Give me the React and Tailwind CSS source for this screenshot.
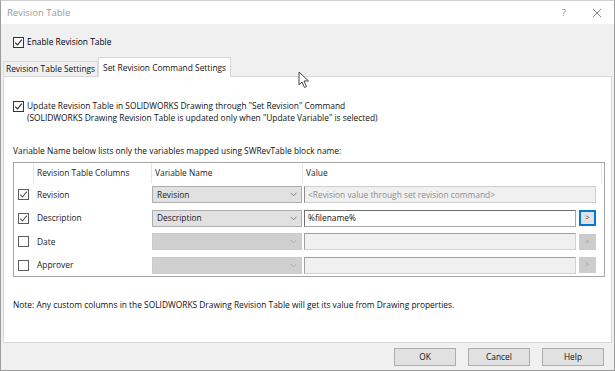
import React from 'react';

const Check = ({ checked, light }) => (
  <span
    className={`w-[11px] h-[11px] flex items-center justify-center bg-white border ${
      light ? 'border-[#5a5a5a]' : 'border-[#333333]'
    }`}
  >
    {checked && (
      <svg width="9" height="9" viewBox="0 0 9 9">
        <path d="M1.2 4.6 L3.5 7 L7.8 1.6" fill="none" stroke={light ? '#555' : '#222'} strokeWidth="1.1" />
      </svg>
    )}
  </span>
);

const Chevron = ({ color }) => (
  <svg width="7" height="5" viewBox="0 0 7 5">
    <path d="M0.5 0.8 L3.5 3.8 L6.5 0.8" fill="none" stroke={color} strokeWidth="0.9" />
  </svg>
);

const rows = [
  { label: 'Revision', checked: true, variable: 'Revision', kind: 'readonly' },
  { label: 'Description', checked: true, variable: 'Description', kind: 'active' },
  { label: 'Date', checked: false, variable: '', kind: 'disabled' },
  { label: 'Approver', checked: false, variable: '', kind: 'disabled' },
];

const Row = ({ row }) => {
  const enabled = row.kind !== 'disabled';
  return (
    <div className="grid grid-cols-[20px_118px_151px_1fr] h-[23.5px] items-center">
      <div className="pl-[4px]">
        <Check checked={row.checked} light />
      </div>
      <div className="pl-[3px] text-[#1a1a1a]">{row.label}</div>
      <div
        className={`h-[17px] w-[150px] flex items-center justify-between pl-[4px] pr-[4px] border ${
          enabled ? 'bg-[#e1e1e1] border-[#adadad] text-[#222]' : 'bg-[#d0d0d0] border-[#cacaca]'
        }`}
      >
        <span>{row.variable}</span>
        <Chevron color={enabled ? '#777' : '#aaa'} />
      </div>
      <div className="flex items-center pl-[1px] pr-[8px] gap-[3px]">
        {row.kind === 'readonly' ? (
          <div className="h-[17px] flex-1 bg-[#f0f0f0] border border-[#cfcfcf] border-l-[#8c8c8c] flex items-center pl-[3px] text-[#8d8d8d]">
            &lt;Revision value through set revision command&gt;
          </div>
        ) : (
          <>
            <div
              className={`h-[17px] flex-1 flex items-center pl-[3px] border ${
                row.kind === 'active'
                  ? 'bg-white border-[#a8a8a8] border-t-[#6e6e6e] border-l-[#6e6e6e] text-[#111]'
                  : 'bg-[#f0f0f0] border-[#d4d4d4] border-t-[#a0a0a0] border-l-[#a0a0a0]'
              }`}
            >
              {row.kind === 'active' ? '%filename%' : ''}
            </div>
            <div
              className={`w-[17px] h-[16px] flex items-center justify-center text-[7px] ${
                row.kind === 'active'
                  ? 'bg-[#e1e1e1] border border-[#0078d7] outline outline-[#0078d7] -outline-offset-2 text-[#333]'
                  : 'bg-[#cccccc] text-[#9d9d9d]'
              }`}
            >
              &gt;
            </div>
          </>
        )}
      </div>
    </div>
  );
};

const Btn = ({ children }) => (
  <div className="w-[62px] h-[18px] bg-[#e1e1e1] border border-[#adadad] flex items-center justify-center text-[#111]">
    {children}
  </div>
);

export default function App() {
  return (
    <div className="relative w-[615px] h-[371px] bg-[#f0f0f0] border border-[#9c9c9c] border-t-[#cfcfcf] flex flex-col font-['Segoe_UI','Open_Sans',sans-serif] text-[8.4px] leading-[12px] text-black overflow-hidden">
      <div className="h-[23px] bg-white flex items-center justify-between pl-[6px] pr-[12px] shrink-0">
        <span className="text-[9.5px] text-[#9a9a9a]">Revision Table</span>
        <div className="flex items-center gap-[26px] text-[#8a8a8a]">
          <span className="text-[9px]">?</span>
          <svg width="10" height="10" viewBox="0 0 10 10">
            <path d="M1 1 L9 9 M9 1 L1 9" stroke="#777" strokeWidth="0.9" />
          </svg>
        </div>
      </div>

      <div className="pl-[12px] pt-[13px] h-[33px] flex items-start gap-[3px] shrink-0">
        <Check checked />
        <span className="-mt-[1px]">Enable Revision Table</span>
      </div>

      <div className="flex items-end px-[2px] h-[19px] shrink-0">
        <div className="h-[15px] px-[2px] flex items-center bg-[#f0f0f0] border border-b-0 border-[#d9d9d9] text-[#111]">
          Revision Table Settings
        </div>
        <div className="h-[20px] -mb-[1px] px-[4px] flex items-center bg-white border border-b-0 border-[#d9d9d9] relative z-10 text-[#111]">
          Set Revision Command Settings
        </div>
      </div>

      <div className="flex-1 mx-[2px] bg-white border border-[#d9d9d9] pl-[9px] pr-[2px] pt-[24px]">
        <div className="flex items-start gap-[3px]">
          <Check checked />
          <div className="-mt-[1px] text-[#111]">
            <div>Update Revision Table in SOLIDWORKS Drawing through "Set Revision" Command</div>
            <div>(SOLIDWORKS Drawing Revision Table is updated only when "Update Variable" is selected)</div>
          </div>
        </div>

        <div className="mt-[21px] text-[#111]">Variable Name below lists only the variables mapped using SWRevTable block name:</div>

        <div className="mt-[5px] w-[592px] h-[115px] border border-[#a5a5a5] bg-white">
          <div className="grid grid-cols-[20px_118px_151px_1fr] h-[20px] text-[#222]">
            <div className="border-r border-[#e5e5e5]" />
            <div className="border-r border-[#e5e5e5] pl-[3px] flex items-center">Revision Table Columns</div>
            <div className="border-r border-[#e5e5e5] pl-[3px] flex items-center">Variable Name</div>
            <div className="pl-[3px] flex items-center mr-[2px] border-r border-[#e5e5e5]">Value</div>
          </div>
          {rows.map((r) => (
            <Row key={r.label} row={r} />
          ))}
        </div>

        <div className="mt-[22px] text-[#111]">
          Note: Any custom columns in the SOLIDWORKS Drawing Revision Table will get its value from Drawing properties.
        </div>
      </div>

      <div className="h-[27px] shrink-0 flex items-center justify-end gap-[12px] pr-[10px]">
        <Btn>OK</Btn>
        <Btn>Cancel</Btn>
        <Btn>Help</Btn>
      </div>

      <svg className="absolute left-[297px] top-[70px]" width="12" height="18" viewBox="0 0 12 18">
        <path d="M1 1 L1 14 L4 11 L6.5 16.5 L8.5 15.5 L6 10 L10.5 10 Z" fill="white" stroke="#333" strokeWidth="0.9" strokeLinejoin="round" />
      </svg>
    </div>
  );
}
